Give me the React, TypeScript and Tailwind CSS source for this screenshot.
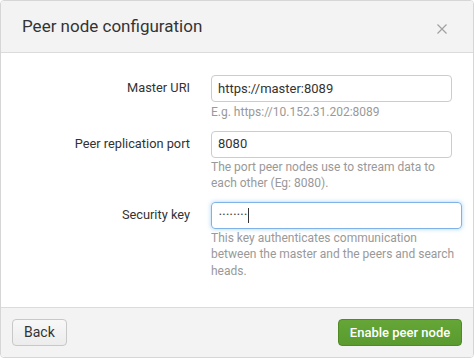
import React from "react";

export default function App() {
    return (
        <div className="w-[474px] h-[358px] bg-white overflow-hidden" style={{ fontFamily: "Roboto, 'Liberation Sans', sans-serif" }}>
            <div className="h-full rounded-[4px] border border-[#d6d6d6] flex flex-col overflow-hidden">
                <div className="h-[52px] bg-[#f3f3f3] border-b border-[#dcdcdc] flex items-center justify-between pl-[21px] pr-[26px] shrink-0">
                    <h2 className="text-[17px] text-[#333] font-normal mt-[1px]">Peer node configuration</h2>
                    <svg width="10" height="10" viewBox="0 0 10 10" className="mt-[5px]">
                        <path d="M0.5 0.5 L9.5 9.5 M9.5 0.5 L0.5 9.5" stroke="#a0a0a0" strokeWidth="1.2" />
                    </svg>
                </div>

                <div className="flex-1 pt-[22px] flex flex-col gap-[10px]">
                    <div className="flex">
                        <label className="w-[189px] text-right text-[12.8px] text-[#333] leading-[26px] shrink-0">Master URI</label>
                        <div className="ml-[21px] w-[241px]">
                            <div className="h-[27px] border border-[#ccc] rounded-[4px] px-[6px] flex items-center text-[13px] text-[#333]">https://master:8089</div>
                            <p className="text-[12px] text-[#999] leading-[16.5px] mt-[2px]">E.g. https://10.152.31.202:8089</p>
                        </div>
                    </div>

                    <div className="flex">
                        <label className="w-[189px] text-right text-[12.8px] text-[#333] leading-[26px] shrink-0">Peer replication port</label>
                        <div className="ml-[21px] w-[241px]">
                            <div className="h-[27px] border border-[#ccc] rounded-[4px] px-[6px] flex items-center text-[13px] text-[#333]">8080</div>
                            <p className="text-[12px] text-[#999] leading-[16.5px] mt-[1px]">The port peer nodes use to stream data to each other (Eg: 8080).</p>
                        </div>
                    </div>

                    <div className="flex">
                        <label className="w-[189px] text-right text-[12.8px] text-[#333] leading-[26px] shrink-0">Security key</label>
                        <div className="ml-[21px] w-[251px]">
                            <div className="h-[27px] border border-[#7fb3e8] rounded-[4px] px-[7px] flex items-center text-[#444] shadow-[0_0_4px_rgba(82,168,236,0.5)]">
                                <span className="text-[8px] tracking-[0.9px]">••••••••</span>
                                <span className="w-px h-[15px] bg-[#333]"></span>
                            </div>
                            <p className="text-[12px] text-[#999] leading-[16.5px] mt-[1px]">This key authenticates communication between the master and the peers and search heads.</p>
                        </div>
                    </div>
                </div>

                <div className="h-[50px] bg-[#f3f3f3] border-t border-[#dcdcdc] flex items-center justify-between px-[11px] shrink-0">
                    <button className="h-[27px] px-[11px] rounded-[4px] border border-[#c8c8c8] bg-gradient-to-b from-[#f8f8f8] to-[#ececec] text-[14px] text-[#333]">Back</button>
                    <button className="h-[27px] w-[124px] rounded-[4px] border border-[#4f8a24] bg-gradient-to-b from-[#65a637] to-[#5a9a2f] text-[13px] font-medium text-white">Enable peer node</button>
                </div>
            </div>
        </div>
    );
}
